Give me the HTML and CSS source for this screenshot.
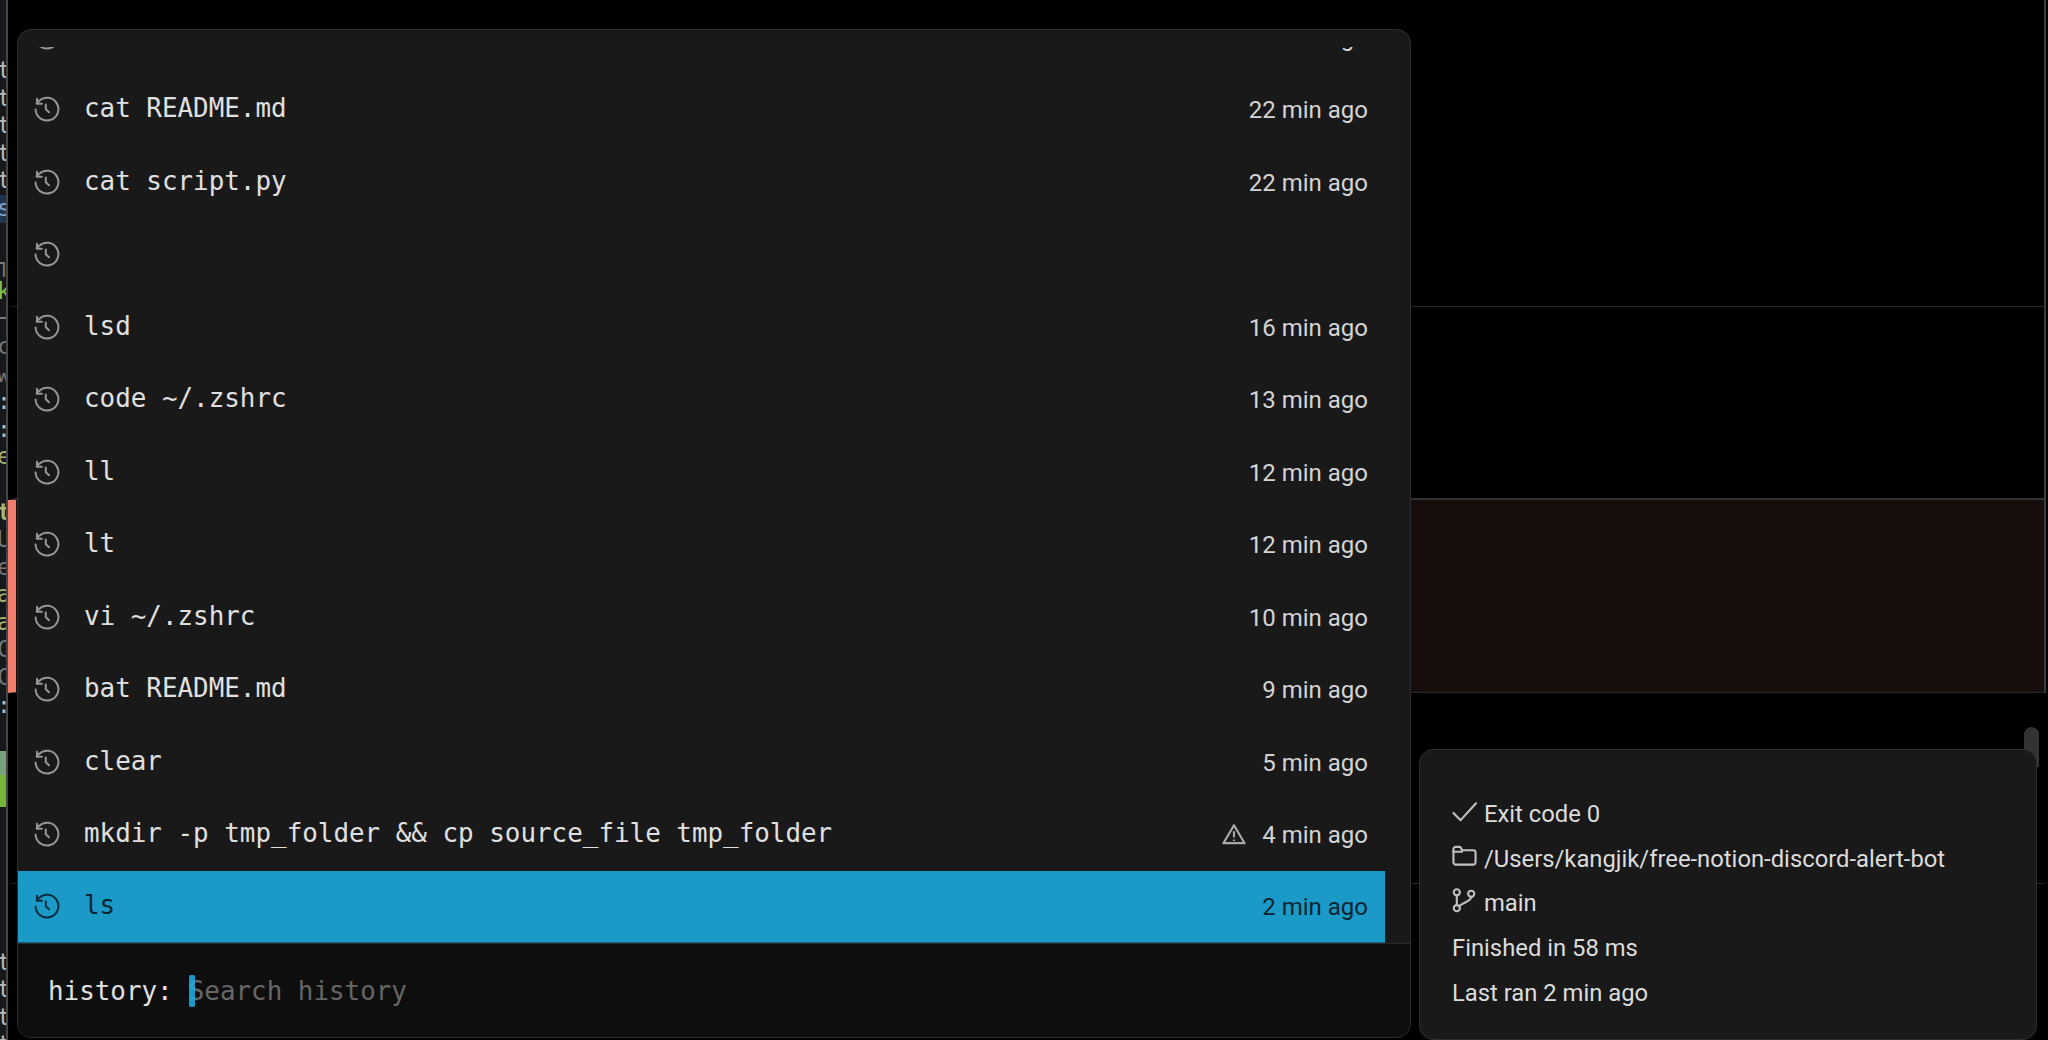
FILE: index.html
```html
<!DOCTYPE html>
<html lang="en">
<head>
<meta charset="utf-8">
<title>Terminal history</title>
<link rel="stylesheet" href="styles.css">
</head>
<body>
<svg class="sprite" width="0" height="0" aria-hidden="true">
  <symbol id="i-history" viewBox="0 0 26 26">
    <path d="M1.6 13.5A11.4 11.4 0 1 0 5 5L2.6 7.4"/>
    <path d="M3 2.8v4.9h4.9" class="thin"/>
    <path d="M11.8 8.6v4.6l3.2 3"/>
  </symbol>
</svg>
<div class="app">
  <aside class="rail">
    <div class="rail-top">
      <div class="ln">t</div><div class="ln">t</div><div class="ln">t</div><div class="ln">t</div><div class="ln">t</div>
      <div class="ln ln-link">s</div>
      <div class="ln"></div>
      <div class="ln ln-dim">┐</div>
      <div class="ln ln-green">k</div>
      <div class="ln ln-dim">─</div>
      <div class="ln ln-dim">c</div>
      <div class="ln ln-dim">w</div>
      <div class="ln">:</div>
      <div class="ln">:</div>
      <div class="ln ln-olive">e</div>
      <div class="ln"></div>
      <div class="ln ln-olive ln-bold">t</div>
      <div class="ln ln-dim">U</div>
      <div class="ln ln-dim">e</div>
      <div class="ln ln-olive">a</div>
      <div class="ln ln-olive">a</div>
      <div class="ln ln-dim">C</div>
      <div class="ln ln-dim">C</div>
      <div class="ln">:</div>
      <div class="ln ln-gap"></div>
      <div class="ln-block ln-muted"></div>
      <div class="ln-block ln-bright"></div>
    </div>
    <div class="rail-bottom">
      <div class="ln">t</div><div class="ln">t</div><div class="ln">t</div><div class="ln">t</div>
    </div>
  </aside>
  <main class="term">
    <section class="block block-a"></section>
    <section class="block block-b"></section>
    <section class="block block-c"></section>
    <section class="block block-d"></section>
    <section class="block block-e"></section>
  </main>
</div>

<div class="thumb"></div>

<div class="popup">
  <div class="list">
    <div class="row"><svg class="hist"><use href="#i-history"/></svg><span class="cmd">ls</span><span class="time">24 min ago</span></div>
    <div class="row"><svg class="hist"><use href="#i-history"/></svg><span class="cmd">cat README.md</span><span class="time">22 min ago</span></div>
    <div class="row"><svg class="hist"><use href="#i-history"/></svg><span class="cmd">cat script.py</span><span class="time">22 min ago</span></div>
    <div class="row"><svg class="hist"><use href="#i-history"/></svg><span class="cmd"></span></div>
    <div class="row"><svg class="hist"><use href="#i-history"/></svg><span class="cmd">lsd</span><span class="time">16 min ago</span></div>
    <div class="row"><svg class="hist"><use href="#i-history"/></svg><span class="cmd">code ~/.zshrc</span><span class="time">13 min ago</span></div>
    <div class="row"><svg class="hist"><use href="#i-history"/></svg><span class="cmd">ll</span><span class="time">12 min ago</span></div>
    <div class="row"><svg class="hist"><use href="#i-history"/></svg><span class="cmd">lt</span><span class="time">12 min ago</span></div>
    <div class="row"><svg class="hist"><use href="#i-history"/></svg><span class="cmd">vi ~/.zshrc</span><span class="time">10 min ago</span></div>
    <div class="row"><svg class="hist"><use href="#i-history"/></svg><span class="cmd">bat README.md</span><span class="time">9 min ago</span></div>
    <div class="row"><svg class="hist"><use href="#i-history"/></svg><span class="cmd">clear</span><span class="time">5 min ago</span></div>
    <div class="row"><svg class="hist"><use href="#i-history"/></svg><span class="cmd">mkdir -p tmp_folder &amp;&amp; cp source_file tmp_folder</span>
      <svg class="warn" viewBox="0 0 24 22"><path d="M12 2.2 22.6 20.2H1.4Z"/><path d="M12 8.2v6.2"/><path d="M12 16.6v1.4"/></svg>
      <span class="time">4 min ago</span></div>
    <div class="row row-selected"><svg class="hist"><use href="#i-history"/></svg><span class="cmd">ls</span><span class="time">2 min ago</span></div>
  </div>
  <div class="search">
    <span class="prompt">history:</span>
    <span class="field"><i class="caret"></i>Search history</span>
  </div>
</div>

<div class="info">
  <div class="info-row">
    <svg class="info-icon" viewBox="0 0 26 26"><path d="M1.500 14.500 9 22 25 4.500"/></svg>
    <span>Exit code 0</span>
  </div>
  <div class="info-row">
    <svg class="info-icon" viewBox="0 0 26 26"><path d="M1.500 8V5.500a2.500 2.500 0 0 1 2.500-2.500h3.500a2 2 0 0 1 1.700.9L10.500 6.500H22a2.500 2.500 0 0 1 2.500 2.500V19a2.500 2.500 0 0 1-2.500 2.500H4A2.500 2.500 0 0 1 1.500 19Z"/><path d="M1.500 8H10.500"/></svg>
    <span>/Users/kangjik/free-notion-discord-alert-bot</span>
  </div>
  <div class="info-row">
    <svg class="info-icon" viewBox="0 0 26 26"><circle cx="5" cy="4.500" r="3.200"/><circle cx="20" cy="6" r="3.200"/><circle cx="5" cy="21" r="3.200"/><path d="M5 7.700V17.800"/><path d="M20 9.200c0 5-8 5.500-12.500 9.800"/></svg>
    <span>main</span>
  </div>
  <div class="info-row">Finished in 58 ms</div>
  <div class="info-row">Last ran 2 min ago</div>
</div>
</body>
</html>
```
FILE: styles.css
```css
* { box-sizing: border-box; }
html, body {
  margin: 0;
  height: 100%;
  background: #000;
  overflow: hidden;
}
.sprite { position: absolute; }

.app {
  display: flex;
  height: 1040px;
}

/* clipped editor column on the far left */
.rail {
  width: 8px;
  flex: none;
  display: flex;
  flex-direction: column;
  justify-content: space-between;
  padding-top: 57px;
  background: #16181b;
  border-right: 2px solid #434547;
  overflow: hidden;
  font: 23px/27.6px "DejaVu Sans Mono", monospace;
  color: #b8b8b8;
}
.rail-bottom { margin-bottom: -19px; }
.ln {
  height: 27.6px;
  text-indent: -3px;
  white-space: nowrap;
}
.ln-gap { height: 31.6px; }
.ln-link { color: #7f9fc4; background: #1f344e; }
.ln-dim { color: #77797c; }
.ln-green { color: #84c046; }
.ln-olive { color: #a9b272; }
.ln-bold { font-weight: bold; }
.ln-block { height: 24px; }
.ln-muted { background: #78a07c; }
.ln-bright { background: #76b43a; height: 32px; }

/* terminal blocks behind the popups */
.term {
  flex: 1;
  display: flex;
  flex-direction: column;
  margin-right: 2px;
}
.block {
  border-bottom: 1px solid #252525;
  border-left: 8px solid #000;
  border-right: 2px solid #3c3c3c;
}
.block-a { height: 307px; }
.block-b { height: 193px; border-bottom: 2px solid #333; }
.block-c {
  height: 193px;
  background: #170d0b;
  border-left-color: #f27d6d;
  border-bottom-color: #2a2a2a;
}
.block-d { height: 191px; border-right-color: #000; }
.block-e { flex: 1; border: 0; }

.thumb {
  position: absolute;
  left: 2024px;
  top: 727px;
  width: 15px;
  height: 40px;
  border-radius: 8px 8px 0 0;
  background: #333;
}

/* history popup */
.popup {
  position: absolute;
  left: 17px;
  top: 29px;
  width: 1394px;
  height: 1009px;
  display: flex;
  flex-direction: column;
  background: #191919;
  border: 1px solid #2e2e2e;
  border-radius: 14px;
  overflow: hidden;
}
.list {
  height: 896px;
  flex: none;
  margin-top: 17px;
  padding-right: 25px;
  display: flex;
  flex-direction: column;
  justify-content: flex-end;
  overflow: hidden;
}
.row {
  flex: none;
  height: 72.5px;
  display: flex;
  align-items: center;
  padding: 0 17px 0 16px;
  font: 25.9px "DejaVu Sans Mono", monospace;
  color: #e0e0e0;
}
.hist {
  width: 26px;
  height: 26px;
  flex: none;
  margin-right: 24px;
  fill: none;
  stroke: #969696;
  stroke-width: 2;
  stroke-linecap: round;
  stroke-linejoin: round;
}
.cmd {
  flex: 1;
  white-space: pre;
  padding-bottom: 2px;
}
.time {
  font: 24px Roboto, sans-serif;
  color: #d4d4d4;
  padding-top: 2px;
}
.warn {
  width: 24px;
  height: 22px;
  margin-right: 16px;
  fill: none;
  stroke: #a8a8a8;
  stroke-width: 2.2;
  stroke-linejoin: round;
}
.row-selected {
  background: #1b9ac8;
  border-bottom: 1px solid #0f5f7d;
  color: #0a2531;
}
.row-selected .hist { stroke: #0b2b3a; }
.row-selected .time { color: #0a2531; }

/* search bar */
.search {
  flex: 1;
  display: flex;
  align-items: center;
  padding: 0 0 0 30px;
  background: #0e0e0e;
  border-top: 1px solid #2a2a2a;
  font: 25.9px "DejaVu Sans Mono", monospace;
  color: #e0e0e0;
}
.prompt { margin-right: 16px; }
.field {
  position: relative;
  color: #666;
}
.caret {
  position: absolute;
  left: 0;
  top: -1px;
  bottom: -1px;
  width: 6px;
  border-radius: 2px;
  background: #1fb0e6;
  opacity: .85;
}

/* command info popup */
.info {
  position: absolute;
  left: 1419px;
  top: 749px;
  width: 618px;
  height: 291px;
  padding: 42px 32px 0;
  background: #191919;
  border: 1px solid #2e2e2e;
  border-radius: 14px;
  font: 23.8px/44.7px Roboto, sans-serif;
  color: #dcdcdc;
}
.info-row {
  display: flex;
  align-items: center;
  height: 44.7px;
  gap: 7px;
}
.info-icon {
  width: 25px;
  height: 25px;
  flex: none;
  margin-bottom: 6px;
  fill: none;
  stroke: #c0c0c0;
  stroke-width: 2.2;
  stroke-linecap: round;
  stroke-linejoin: round;
}
```
